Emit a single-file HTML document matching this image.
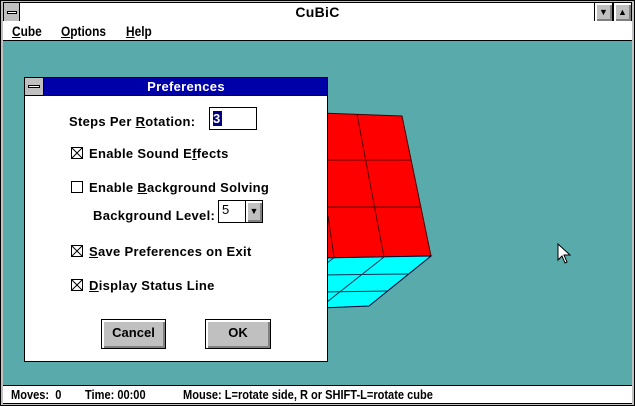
<!DOCTYPE html><html><head><style>
body{margin:0;width:635px;height:406px;overflow:hidden;background:#c0c0c0;font-family:"Liberation Sans",sans-serif;position:relative}
div{position:absolute;box-sizing:border-box}
.t{font-weight:bold;font-size:13px;color:#000;white-space:nowrap;letter-spacing:0.3px}
u{text-decoration:underline}
.cb{width:12px;height:12px;border:1px solid #000;background:#fff}
.btn{background:#c0c0c0;border:1px solid #000;box-shadow:inset 2px 2px 0 #fff,inset -2px -2px 0 #808080;text-align:center;font-weight:bold;font-size:13px;line-height:26px}
.s{font-size:13px;font-weight:bold;white-space:nowrap;transform:scaleX(0.85);transform-origin:left}
</style></head><body>
<div style="left:0;top:0;width:635px;height:406px;background:#c0c0c0;border:1px solid #000"></div>
<div style="left:3px;top:2px;width:629px;height:20px;background:#fff;border:1px solid #000"></div>
<div style="left:3px;top:2px;width:17px;height:20px;background:#c0c0c0;border:1px solid #000"><div style="left:3px;top:8px;width:10px;height:3px;background:#fff;border:1px solid #000"></div></div>
<div class="t" style="left:0;width:635px;top:4px;text-align:center;font-size:14px">CuBiC</div>
<div class="btn" style="left:594px;top:2px;width:19px;height:20px;line-height:18px;font-size:9px">▼</div>
<div class="btn" style="left:613px;top:2px;width:19px;height:20px;line-height:18px;font-size:9px">▲</div>
<div style="left:3px;top:21px;width:629px;height:20px;background:#fff;border-bottom:1px solid #000"></div>
<div class="s" style="left:12px;top:23px;font-size:14px"><u>C</u>ube</div>
<div class="s" style="left:61px;top:23px;font-size:14px"><u>O</u>ptions</div>
<div class="s" style="left:126px;top:23px;font-size:14px"><u>H</u>elp</div>
<div style="left:3px;top:41px;width:629px;height:344px;background:#58abaa"></div>
<svg style="position:absolute;left:0;top:0" width="635" height="406">
<polygon points="320,113 402,116 431,256 320,258" fill="#ff0000" stroke="#400" stroke-width="1"/>
<polygon points="320,258 431,256 369,306 320,308" fill="#00ffff" stroke="#003" stroke-width="1"/>
<g stroke="#500" fill="none"><line x1="357" y1="114" x2="384" y2="257"/><line x1="328" y1="216" x2="334" y2="257"/><line x1="320" y1="160" x2="411" y2="160"/><line x1="320" y1="207" x2="420" y2="207"/></g>
<g stroke="#035" fill="none"><line x1="320" y1="275" x2="408" y2="274"/><line x1="320" y1="292" x2="387" y2="291"/><line x1="384" y1="257" x2="327" y2="302"/><line x1="335" y1="257" x2="327" y2="263"/></g>
<path d="M558,244 L558,260 L562,256 L565,263 L567,262 L564,255 L570,255 Z" fill="#fff" stroke="#000" stroke-width="1"/>
</svg>
<div style="left:24px;top:77px;width:304px;height:285px;background:#fff;border:1px solid #000"></div>
<div style="left:24px;top:77px;width:304px;height:19px;background:#0000a8;border:1px solid #000"></div>
<div style="left:24px;top:77px;width:20px;height:19px;background:#c0c0c0;border:1px solid #000"><div style="left:3px;top:7px;width:12px;height:3px;background:#fff;border:1px solid #000"></div></div>
<div class="t" style="left:44px;width:284px;top:79px;text-align:center;color:#fff">Preferences</div>
<div class="t" style="left:69px;top:114px">Steps Per <u>R</u>otation:</div>
<div style="left:209px;top:107px;width:48px;height:23px;border:1px solid #000;background:#fff"><div style="left:3px;top:3px;width:9px;height:15px;background:#000080;color:#fff;font-size:13px;font-weight:bold;line-height:15px">3</div></div>
<div class="cb" style="left:71px;top:147px"><svg width="10" height="10" style="position:absolute"><path d="M0,0L10,10M10,0L0,10" stroke="#000"/></svg></div>
<div class="t" style="left:89px;top:146px">Enable Sound E<u>f</u>fects</div>
<div class="cb" style="left:71px;top:181px"></div>
<div class="t" style="left:89px;top:180px">Enable <u>B</u>ackground Solving</div>
<div class="t" style="left:93px;top:208px">Background Level:</div>
<div style="left:218px;top:200px;width:45px;height:23px;border:1px solid #000;background:#fff"></div>
<div class="t" style="left:222px;top:202px;font-weight:normal">5</div>
<div class="btn" style="left:245px;top:200px;width:18px;height:23px;line-height:21px;font-size:9px">▼</div>
<div class="cb" style="left:71px;top:245px"><svg width="10" height="10" style="position:absolute"><path d="M0,0L10,10M10,0L0,10" stroke="#000"/></svg></div>
<div class="t" style="left:89px;top:244px"><u>S</u>ave Preferences on Exit</div>
<div class="cb" style="left:71px;top:279px"><svg width="10" height="10" style="position:absolute"><path d="M0,0L10,10M10,0L0,10" stroke="#000"/></svg></div>
<div class="t" style="left:89px;top:278px"><u>D</u>isplay Status Line</div>
<div class="btn" style="left:101px;top:319px;width:65px;height:30px">Cancel</div>
<div class="btn" style="left:205px;top:319px;width:66px;height:30px">OK</div>
<div style="left:3px;top:385px;width:629px;height:19px;background:#fff;border-top:1px solid #000;border-bottom:1px solid #000"></div>
<div class="s" style="left:11px;top:387px">Moves:&nbsp; 0</div>
<div class="s" style="left:85px;top:387px">Time: 00:00</div>
<div class="s" style="left:183px;top:387px">Mouse: L=rotate side, R or SHIFT-L=rotate cube</div>
</body></html>
